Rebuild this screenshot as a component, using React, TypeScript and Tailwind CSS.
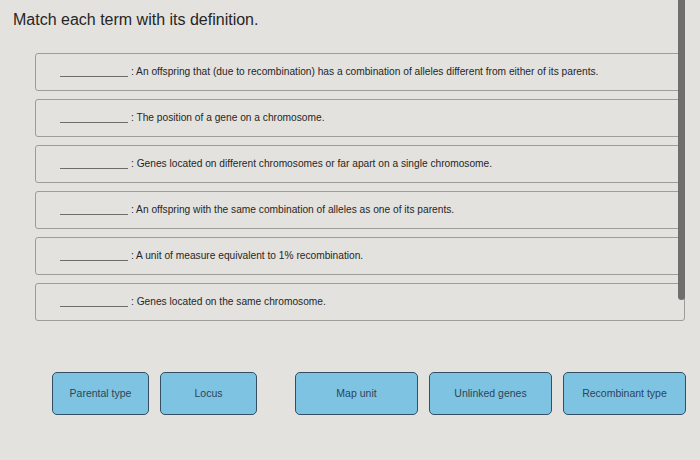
import React from "react";

const ROWS = [
  "An offspring that (due to recombination) has a combination of alleles different from either of its parents.",
  "The position of a gene on a chromosome.",
  "Genes located on different chromosomes or far apart on a single chromosome.",
  "An offspring with the same combination of alleles as one of its parents.",
  "A unit of measure equivalent to 1% recombination.",
  "Genes located on the same chromosome.",
];

// word bank, in the order shown
const TERMS = [
  { label: "Parental type", w: "w-[97px]", ml: "ml-0" },
  { label: "Locus", w: "w-[97px]", ml: "ml-[11px]" },
  { label: "Map unit", w: "w-[123px]", ml: "ml-[38px]" },
  { label: "Unlinked genes", w: "w-[123px]", ml: "ml-[11px]" },
  { label: "Recombinant type", w: "w-[123px]", ml: "ml-[11px]" },
];

export default function App() {
  return (
    <div
      className="relative w-[700px] h-[460px] overflow-hidden bg-[#e3e2de] text-[#2b2b2b]"
      style={{ fontFamily: '"Liberation Sans", Arial, sans-serif' }}
    >
      <h1 className="pl-[13px] pt-[11px] text-[16px] leading-[18px] text-[#262626]">
        Match each term with its definition.
      </h1>

      <div className="mt-[24px] ml-[35px] w-[650px] flex flex-col gap-[8px]">
        {ROWS.map((text) => (
          <div
            key={text}
            className="h-[38px] rounded-[3px] border-[1.5px] border-[#9c9c98] flex items-center pl-[24px]"
          >
            <span className="w-[68px] h-[1px] bg-[#6d6d6b] mt-[8px] shrink-0" />
            <span className="ml-[3px] text-[10.2px] text-[#262626] whitespace-nowrap">
              : {text}
            </span>
          </div>
        ))}
      </div>

      {/* scrollbar thumb */}
      <div className="absolute left-[678px] top-0 w-[7px] h-[300px] rounded-b-full bg-[#6e6f6c]" />

      <div className="mt-[51px] pl-[52px] flex items-start">
        {TERMS.map((t) => (
          <div
            key={t.label}
            className={`${t.w} ${t.ml} h-[43px] rounded-[5px] border-[1.5px] border-[#344f63] bg-[#7fc3e2] flex items-center justify-center text-[10.5px] text-[#2c4558]`}
          >
            {t.label}
          </div>
        ))}
      </div>
    </div>
  );
}
